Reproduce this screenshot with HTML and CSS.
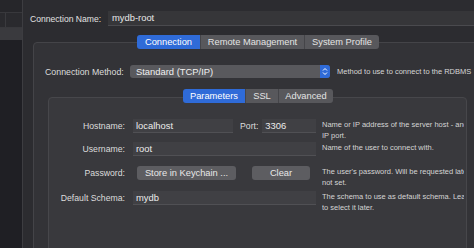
FILE: index.html
```html
<!DOCTYPE html>
<html lang="en">
<head>
<link rel="stylesheet" href="styles.css">
</head>
<body>
<div class="sidebar">
  <div class="side-top"></div>
  <div class="side-head"><span class="side-split"></span></div>
  <div class="side-row"></div>
</div>
<div class="main">
  <div class="name-row">
    <span class="name-label">Connection Name:</span>
    <span class="name-field">mydb-root</span>
  </div>
  <div class="group">
    <div class="tabs outer-tabs">
      <span class="tab active">Connection</span>
      <span class="tab">Remote Management</span>
      <span class="tab">System Profile</span>
    </div>
    <div class="method-row">
      <span class="method-label">Connection Method:</span>
      <span class="select">
        <span class="select-text">Standard (TCP/IP)</span>
        <span class="stepper">
          <svg width="6" height="9" viewBox="0 0 6 9"><path d="M1 3.5 L3 1.5 L5 3.5 M1 5.5 L3 7.5 L5 5.5" fill="none" stroke="#fff" stroke-width="1"/></svg>
        </span>
      </span>
      <span class="method-desc">Method to use to connect to the RDBMS</span>
    </div>
    <div class="inner">
      <div class="tabs inner-tabs">
        <span class="tab active">Parameters</span>
        <span class="tab">SSL</span>
        <span class="tab">Advanced</span>
      </div>
      <div class="params">
        <span class="label">Hostname:</span>
        <div class="cell">
          <span class="field host-field">localhost</span>
          <span class="port-label">Port:</span>
          <span class="field port-field">3306</span>
        </div>
        <div class="desc">Name or IP address of the server host - and<br>IP port.</div>

        <span class="label">Username:</span>
        <div class="cell"><span class="field wide">root</span></div>
        <div class="desc">Name of the user to connect with.</div>

        <span class="label">Password:</span>
        <div class="cell">
          <span class="btn store">Store in Keychain ...</span>
          <span class="btn clear">Clear</span>
        </div>
        <div class="desc">The user's password. Will be requested later<br>not set.</div>

        <span class="label">Default Schema:</span>
        <div class="cell"><span class="field wide">mydb</span></div>
        <div class="desc">The schema to use as default schema. Leave<br>to select it later.</div>
      </div>
    </div>
  </div>
</div>
</body>
</html>
```

FILE: styles.css
```css
body {
  margin: 0;
  width: 474px;
  height: 248px;
  overflow: hidden;
  display: flex;
  background: #2c2c30;
  font-family: "Liberation Sans", Arial, sans-serif;
  color: #dcdcdc;
}

.sidebar {
  width: 22px;
  flex: none;
  background: #1f1f24;
  border-right: 1px solid #3d3d41;
}

.side-top {
  height: 12px;
  background: #26262a;
}

.side-head {
  height: 16px;
  background: #2a2a2e;
  border-top: 1px solid #38383c;
  border-bottom: 1px solid #38383c;
  box-sizing: border-box;
  display: flex;
}

.side-split {
  width: 5px;
  border-right: 1px solid #3a3a3e;
}

.side-row {
  height: 12px;
  background: #3a3a3e;
}

.main {
  flex: 1;
  padding-left: 7px;
  min-width: 0;
}

.name-row {
  margin-top: 11px;
  height: 15px;
  display: flex;
  align-items: center;
}

.name-label {
  width: 78px;
  font-size: 8.6px;
  color: #e2e2e2;
}

.name-field {
  flex: 1;
  height: 15px;
  line-height: 14px;
  padding-left: 4px;
  background: #363639;
  border-bottom: 1px solid #4a4a4e;
  box-sizing: border-box;
  font-size: 9.4px;
  color: #e8e8e8;
}

.group {
  margin: 16px 0 0 3px;
  width: 470px;
  height: 220px;
  background: #333337;
  border: 1px solid #444448;
  border-radius: 4px;
  padding-left: 11px;
  box-sizing: border-box;
}

.tabs {
  display: flex;
  height: 14px;
}

.tab {
  box-sizing: border-box;
  white-space: nowrap;
  text-align: center;
  background: #58585c;
  color: #e4e4e4;
  font-size: 9.3px;
  line-height: 14px;
  border-left: 1px solid #454549;
}

.tab:first-child {
  border-left: none;
  border-radius: 3px 0 0 3px;
}

.tab:last-child {
  border-radius: 0 3px 3px 0;
}

.tab.active {
  background: #2f6bd8;
  color: #fff;
}

.outer-tabs {
  margin: -8px 0 0 92px;
}

.outer-tabs .tab:nth-child(1) { width: 63px; }
.outer-tabs .tab:nth-child(2) { width: 104px; }
.outer-tabs .tab:nth-child(3) { width: 75px; }

.method-row {
  margin-top: 16px;
  height: 13px;
  display: flex;
  align-items: center;
}

.method-label {
  width: 85px;
  font-size: 8.8px;
}

.select {
  width: 200px;
  height: 13px;
  display: flex;
  background: #59595d;
  border-radius: 3px;
  overflow: hidden;
}

.select-text {
  flex: 1;
  padding-left: 6px;
  font-size: 9.4px;
  line-height: 13px;
  color: #f0f0f0;
}

.stepper {
  width: 10px;
  background: #2f6bd8;
  display: flex;
  align-items: center;
  justify-content: center;
}

.method-desc {
  margin-left: 7px;
  font-size: 7.5px;
  color: #d6d6d6;
  white-space: nowrap;
}

.inner {
  margin: 19px 0 0 3px;
  width: 419px;
  height: 160px;
  background: #39393d;
  border: 1px solid #47474b;
  border-radius: 4px;
  box-sizing: border-box;
}

.inner-tabs {
  margin: -9px 0 0 134px;
}

.inner-tabs .tab:nth-child(1) { width: 62px; }
.inner-tabs .tab:nth-child(2) { width: 33px; }
.inner-tabs .tab:nth-child(3) { width: 55px; }

.params {
  margin-top: 16px;
  display: grid;
  grid-template-columns: 76px 191px 148px;
  grid-template-rows: 23px 24px 25px 24px;
}

.label {
  font-size: 8.7px;
  line-height: 14px;
  text-align: right;
}

.cell {
  margin-left: 8px;
  display: flex;
  align-items: flex-start;
}

.field {
  height: 14px;
  line-height: 14px;
  padding-left: 3px;
  background: #404044;
  border-bottom: 1px solid #505054;
  box-sizing: border-box;
  font-size: 9.4px;
  color: #ececec;
}

.wide {
  flex: 1;
}

.host-field {
  width: 100px;
}

.port-label {
  margin: 0 4px 0 7px;
  font-size: 8.7px;
  line-height: 14px;
}

.port-field {
  flex: 1;
}

.btn {
  height: 14px;
  line-height: 14px;
  text-align: center;
  background: #5d5d61;
  border-radius: 3px;
  font-size: 9.3px;
  color: #e8e8e8;
}

.store {
  margin-left: 4px;
  width: 99px;
}

.clear {
  margin-left: 16px;
  width: 58px;
}

.desc {
  margin-left: 6px;
  font-size: 7.5px;
  line-height: 11px;
  color: #d4d4d4;
  white-space: nowrap;
  overflow: hidden;
}
```
